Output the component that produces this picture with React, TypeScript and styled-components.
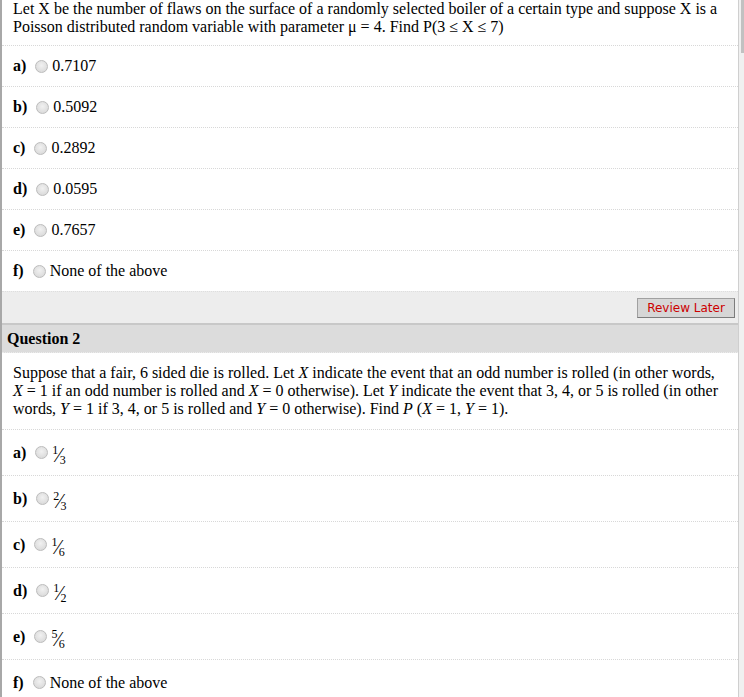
import React from 'react'
import styled, { createGlobalStyle } from 'styled-components'

const GlobalStyle = createGlobalStyle`
  html, body {
    margin: 0;
    padding: 0;
    background: #fff;
    overflow: hidden;
  }
  body {
    font-family: 'Liberation Serif', 'Times New Roman', serif;
    font-size: 16px;
    color: #000;
  }
`

type Option = { label: string; content: React.ReactNode }

const Frac = ({ n, d }: { n: number; d: number }) => (
  <FracWrap>
    <Num>{n}</Num>
    <Slash>⁄</Slash>
    <Den>{d}</Den>
  </FracWrap>
)

const Xi = () => <Var>X</Var>
const Yi = () => <Var>Y</Var>

const firstOptions: Option[] = [
  { label: 'a)', content: '0.7107' },
  { label: 'b)', content: '0.5092' },
  { label: 'c)', content: '0.2892' },
  { label: 'd)', content: '0.0595' },
  { label: 'e)', content: '0.7657' },
  { label: 'f)', content: 'None of the above' },
]

const secondOptions: Option[] = [
  { label: 'a)', content: <Frac n={1} d={3} /> },
  { label: 'b)', content: <Frac n={2} d={3} /> },
  { label: 'c)', content: <Frac n={1} d={6} /> },
  { label: 'd)', content: <Frac n={1} d={2} /> },
  { label: 'e)', content: <Frac n={5} d={6} /> },
  { label: 'f)', content: 'None of the above' },
]

const OptionList = ({ options, tall }: { options: Option[]; tall?: boolean }) => (
  <div>
    {options.map((o) => (
      <OptionRow key={o.label} tall={tall}>
        <Label>{o.label}</Label>
        <Radio />
        <Answer>{o.content}</Answer>
      </OptionRow>
    ))}
  </div>
)

export default function App() {
  return (
    <>
      <GlobalStyle />
      <Page>
        <Main>
          <QuestionText top={0} bottom={9}>
            Let X be the number of flaws on the surface of a randomly selected
            boiler of a certain type and suppose X is a Poisson distributed
            random variable with parameter μ = 4. Find P(3 ≤ X ≤ 7)
          </QuestionText>
          <OptionList options={firstOptions} />

          <ActionBar>
            <ReviewButton>Review Later</ReviewButton>
          </ActionBar>

          <QuestionHeader>Question 2</QuestionHeader>
          <QuestionText top={11} bottom={11}>
            Suppose that a fair, 6 sided die is rolled. Let <Xi /> indicate the
            event that an odd number is rolled (in other words, <Xi /> = 1 if an
            odd number is rolled and <Xi /> = 0 otherwise). Let <Yi /> indicate
            the event that 3, 4, or 5 is rolled (in other words, <Yi /> = 1 if 3,
            4, or 5 is rolled and <Yi /> = 0 otherwise). Find <Var>P</Var> (
            <Xi /> = 1, <Yi /> = 1).
          </QuestionText>
          <OptionList options={secondOptions} tall />
        </Main>
        <Scrollbar>
          <Thumb />
        </Scrollbar>
      </Page>
    </>
  )
}

const Page = styled.div`
  display: flex;
  align-items: flex-start;
  width: 744px;
  height: 697px;
  overflow: hidden;
`

const Main = styled.div`
  flex-shrink: 0;
  width: 736px;
  border-left: 2px solid #a8a8a8;
  border-right: 1px solid #cfcfcf;
`

const Scrollbar = styled.div`
  width: 5px;
  height: 697px;
  background: #f0f0f0;
`

const Thumb = styled.div`
  margin-left: 2px;
  width: 3px;
  height: 53px;
  background: #c1c1c1;
`

interface QuestionTextProps {
  top: number
  bottom: number
}

const QuestionText = styled.div<QuestionTextProps>`
  padding: ${({ top, bottom }) => `${top}px 13px ${bottom}px 11px`};
  line-height: 18px;
`

const Var = styled.i`
  font-style: italic;
  line-height: 16px;
`

interface OptionRowProps {
  tall?: boolean
}

const OptionRow = styled.div<OptionRowProps>`
  display: flex;
  align-items: center;
  height: ${({ tall }) => (tall ? '45px' : '40px')};
  border-top: 1px dotted #d8d8d8;
  padding-left: 11px;
`

const Label = styled.span`
  font-weight: bold;
  margin-right: 9px;
`

const Radio = styled.span`
  display: inline-block;
  box-sizing: border-box;
  width: 13px;
  height: 13px;
  border-radius: 50%;
  border: 1px solid #bcbcbc;
  background: radial-gradient(circle at 50% 40%, #f1f1f1 0%, #dddddd 70%, #d4d4d4 100%);
  margin-right: 4px;
`

const Answer = styled.span`
  line-height: 18px;
`

const FracWrap = styled.span`
  display: inline-flex;
  align-items: flex-start;
  height: 22px;
  font-size: 12px;
  margin-top: -2px;
`

const Num = styled.span`
  line-height: 12px;
`

const Slash = styled.span`
  font-size: 20px;
  line-height: 22px;
  margin: 0 -1px;
`

const Den = styled.span`
  line-height: 12px;
  margin-top: 10px;
`

const ActionBar = styled.div`
  display: flex;
  justify-content: flex-end;
  align-items: center;
  height: 31px;
  background: #ededed;
  border-top: 1px dotted #dedede;
  padding-right: 3px;
`

const ReviewButton = styled.button`
  font-family: 'DejaVu Sans', Verdana, sans-serif;
  font-size: 12px;
  color: #cc0000;
  background: #d6d6d6;
  border: 1px solid #a0a0a0;
  border-right-color: #7c7c7c;
  border-bottom-color: #7c7c7c;
  height: 20px;
  width: 98px;
  padding: 0;
  margin-top: 1px;
`

const QuestionHeader = styled.div`
  height: 27px;
  display: flex;
  align-items: center;
  padding-left: 5px;
  background: #dcdcdc;
  border-top: 2px solid #c8c8c8;
  border-bottom: 1px dotted #ececec;
  font-weight: bold;
`
